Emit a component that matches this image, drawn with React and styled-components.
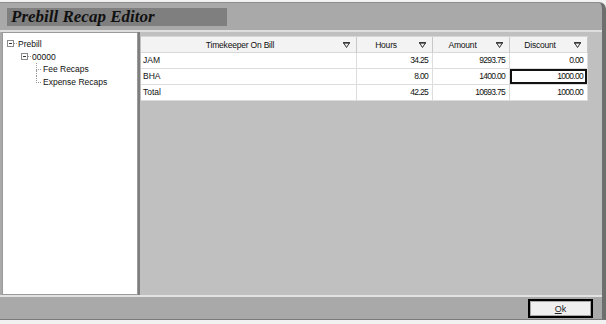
import styled, { createGlobalStyle } from 'styled-components';

const GlobalStyle = createGlobalStyle`
  html, body {
    margin: 0;
    padding: 0;
    background: #f2f2f2;
  }
  body {
    font-family: 'Liberation Sans', Arial, sans-serif;
  }
`;

const Page = styled.div`
  width: 606px;
  height: 324px;
  overflow: hidden;
  padding-top: 2px;
  box-sizing: border-box;
`;

const Window = styled.div`
  width: 606px;
  height: 318px;
  box-sizing: border-box;
  border-top: 1px solid #8c8c8c;
  border-right: 4px solid #6e6e6e;
  border-bottom: 1px solid #7a7a7a;
  border-top-right-radius: 7px;
  background: #a9a9a9;
  display: flex;
  flex-direction: column;
`;

const TitleBar = styled.div`
  height: 27px;
  padding: 5px 0 0 7px;
  box-sizing: border-box;
`;

const TitleBox = styled.div`
  width: 220px;
  height: 18px;
  background: #7f7f7f;
  padding-left: 4px;
  box-sizing: border-box;
  font-family: 'Liberation Serif', 'Times New Roman', serif;
  font-weight: bold;
  font-style: italic;
  font-size: 17px;
  line-height: 18px;
  color: #111;
  white-space: nowrap;
`;

const Divider = styled.div`
  height: 2px;
  background: #dedede;
`;

const Main = styled.div`
  height: 263px;
  display: flex;
  padding-left: 2px;
`;

const TreePanel = styled.div`
  width: 136px;
  box-sizing: border-box;
  background: #fff;
  border: 1px solid #9a9a9a;
  padding-top: 4px;
  font-size: 8.5px;
  color: #111;
`;

const TreeRow = styled.div`
  display: flex;
  align-items: center;
  height: 13px;
  padding-left: ${p => p.$indent}px;
`;

const Expander = styled.span`
  width: 5px;
  height: 5px;
  border: 1px solid #8a8a8a;
  display: flex;
  align-items: center;
  justify-content: center;
  background: #fff;

  &::after {
    content: '';
    width: 3px;
    height: 1px;
    background: #333;
  }
`;

const Dash = styled.span`
  width: 3px;
  border-top: 1px dotted #999;
  margin-right: 1px;
`;

const TreeChildren = styled.div`
  padding-left: 33px;
`;

const LeafRow = styled.div`
  display: flex;
  height: 13px;
  align-items: stretch;
`;

const Connector = styled.span`
  width: 5px;
  display: flex;
  flex-direction: column;
  margin-right: 2px;
`;

const ConnTop = styled.span`
  flex: 1;
  border-left: 1px dotted #999;
  border-bottom: 1px dotted #999;
`;

const ConnBottom = styled.span`
  flex: 1;
  border-left: ${p => (p.$last ? 'none' : '1px dotted #999')};
`;

const LeafText = styled.span`
  line-height: 13px;
`;

const GridPanel = styled.div`
  flex: 1;
  background: #c0c0c0;
  border-left: 2px solid #7e7e7e;
  padding: 4px 0 0 1px;
`;

const Table = styled.div`
  display: grid;
  grid-template-columns: 216px 76px 77px 78px;
  grid-auto-rows: 16px;
  width: max-content;
  font-size: 8.5px;
  color: #111;
  border-top: 1px solid #d6d6d6;
`;

const HeaderCell = styled.div`
  display: flex;
  align-items: center;
  background: #f3f3f3;
  border-right: 1px solid #c8c8c8;
  border-bottom: 1px solid #d8d8d8;
  box-sizing: border-box;
`;

const HeaderText = styled.span`
  flex: 1;
  text-align: center;
  letter-spacing: -0.2px;
`;

const FilterIcon = styled.svg`
  width: 7px;
  height: 6px;
  margin: 0 6px 0 4px;
`;

const Cell = styled.div`
  background: #fff;
  border-right: 1px solid #dcdcdc;
  border-bottom: 1px solid #dcdcdc;
  box-sizing: border-box;
  line-height: 15px;
  padding: 0 ${p => (p.$num ? '4px' : '2px')};
  text-align: ${p => (p.$num ? 'right' : 'left')};
  letter-spacing: ${p => (p.$num ? '-0.7px' : '0')};
  box-shadow: ${p => (p.$focus ? 'inset 0 0 0 2px #111' : 'none')};
`;

const Footer = styled.div`
  flex: 1;
  border-top: 2px solid #e2e2e2;
  display: flex;
  justify-content: flex-end;
  align-items: flex-start;
  padding: 2px 9px 0 0;
`;

const OkFrame = styled.div`
  width: 65px;
  height: 19px;
  box-sizing: border-box;
  border: 2px solid #000;
  display: flex;
`;

const OkButton = styled.button`
  flex: 1;
  margin: 0;
  padding: 0;
  border: 1px solid #a8a8a8;
  background: #efefef;
  font-family: 'Liberation Sans', Arial, sans-serif;
  font-size: 9px;
  color: #222;
  line-height: 12px;

  u {
    text-decoration: underline;
  }
`;

const columns = ['Timekeeper On Bill', 'Hours', 'Amount', 'Discount'];

const rows = [
  { name: 'JAM', hours: '34.25', amount: '9293.75', discount: '0.00' },
  { name: 'BHA', hours: '8.00', amount: '1400.00', discount: '1000.00', focus: true },
  { name: 'Total', hours: '42.25', amount: '10693.75', discount: '1000.00' },
];

function Filter() {
  return (
    <FilterIcon viewBox="0 0 7 6">
      <path d="M0.5 0.8 H6.5 L3.5 5.5 Z" fill="none" stroke="#333" strokeWidth="1" />
      <path d="M0 0.8 H7" stroke="#333" strokeWidth="1.4" />
    </FilterIcon>
  );
}

export default function App() {
  return (
    <Page>
      <GlobalStyle />
      <Window>
        <TitleBar>
          <TitleBox>Prebill Recap Editor</TitleBox>
        </TitleBar>
        <Divider />
        <Main>
          <TreePanel>
            <TreeRow $indent={4}>
              <Expander />
              <Dash />
              Prebill
            </TreeRow>
            <TreeRow $indent={18}>
              <Expander />
              <Dash />
              00000
            </TreeRow>
            <TreeChildren>
              <LeafRow>
                <Connector>
                  <ConnTop />
                  <ConnBottom />
                </Connector>
                <LeafText>Fee Recaps</LeafText>
              </LeafRow>
              <LeafRow>
                <Connector>
                  <ConnTop />
                  <ConnBottom $last />
                </Connector>
                <LeafText>Expense Recaps</LeafText>
              </LeafRow>
            </TreeChildren>
          </TreePanel>
          <GridPanel>
            <Table>
              {columns.map(c => (
                <HeaderCell key={c}>
                  <HeaderText>{c}</HeaderText>
                  <Filter />
                </HeaderCell>
              ))}
              {rows.map(r => [
                <Cell key={r.name + 'n'}>{r.name}</Cell>,
                <Cell key={r.name + 'h'} $num>{r.hours}</Cell>,
                <Cell key={r.name + 'a'} $num>{r.amount}</Cell>,
                <Cell key={r.name + 'd'} $num $focus={r.focus}>{r.discount}</Cell>,
              ])}
            </Table>
          </GridPanel>
        </Main>
        <Footer>
          <OkFrame>
            <OkButton><u>O</u>k</OkButton>
          </OkFrame>
        </Footer>
      </Window>
    </Page>
  );
}
